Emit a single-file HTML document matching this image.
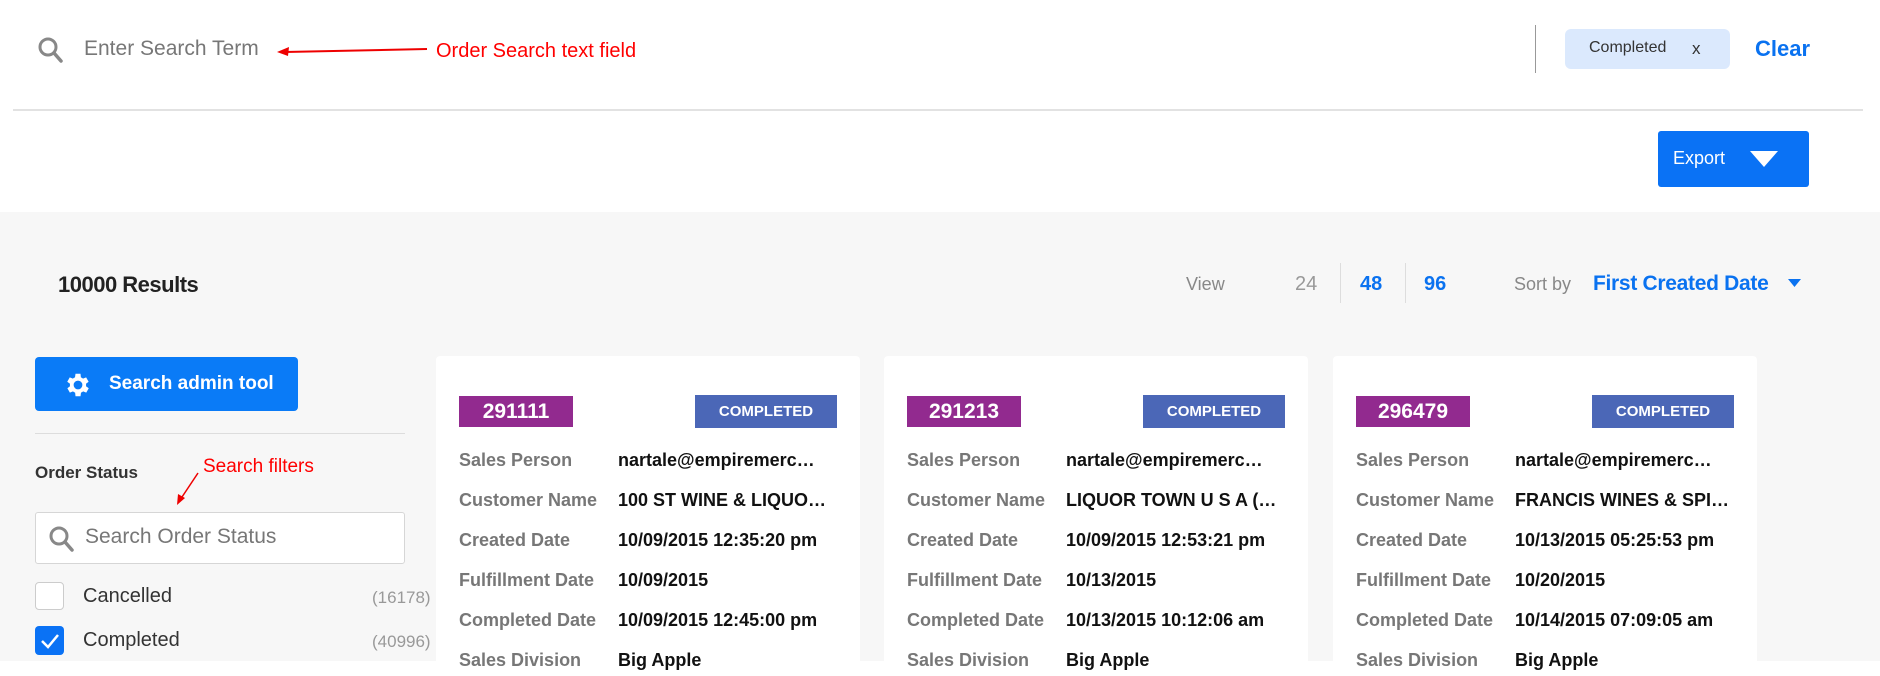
<!DOCTYPE html>
<html><head><meta charset="utf-8"><style>
*{margin:0;padding:0;box-sizing:border-box}
body{width:1880px;height:661px;overflow:hidden;background:#fff;font-family:"Liberation Sans",sans-serif;position:relative}
.a{position:absolute;white-space:nowrap}
.gray{position:absolute;left:0;top:212px;width:1880px;height:449px;background:#f7f7f7}
.card{position:absolute;top:356px;width:424px;height:320px;background:#fff;border-radius:4px}
.num{position:absolute;left:23px;top:40px;width:114px;height:31px;background:#922a8f;color:#fff;font-weight:bold;font-size:21px;text-align:center;line-height:31px}
.st{position:absolute;left:259px;top:39px;width:142px;height:33px;background:#4b67b7;color:#fff;font-weight:bold;font-size:15px;text-align:center;line-height:33px}
.lb{position:absolute;left:23px;font-size:18px;font-weight:bold;color:#777;white-space:nowrap}
.vl{position:absolute;left:182px;font-size:18px;font-weight:bold;color:#111;white-space:nowrap}
</style></head><body>
<svg class="a" style="left:36px;top:35px" width="30" height="30" viewBox="0 0 30 30"><circle cx="12" cy="12" r="8" fill="none" stroke="#888" stroke-width="3"/><line x1="18" y1="18" x2="25" y2="26" stroke="#888" stroke-width="3.5" stroke-linecap="round"/></svg>
<div class="a" style="left:84px;top:37px;font-size:21px;color:#777">Enter Search Term</div>
<svg class="a" style="left:275px;top:44px" width="160" height="14"><line x1="10" y1="8" x2="152" y2="5" stroke="#e00" stroke-width="2"/><polygon points="2,8 14,3 13,12" fill="#e00"/></svg>
<div class="a" style="left:436px;top:40px;font-size:20px;color:#f00">Order Search text field</div>
<div class="a" style="left:1535px;top:25px;width:1px;height:48px;background:#999"></div>
<div class="a" style="left:1565px;top:29px;width:165px;height:40px;background:#dbe9fd;border-radius:6px"></div>
<div class="a" style="left:1589px;top:39px;font-size:16px;color:#333">Completed</div>
<div class="a" style="left:1692px;top:39px;font-size:17px;color:#333">x</div>
<div class="a" style="left:1755px;top:36px;font-size:22px;font-weight:bold;color:#0a72f0">Clear</div>
<div class="a" style="left:13px;top:109px;width:1850px;height:2px;background:#e2e2e2"></div>
<div class="a" style="left:1658px;top:131px;width:151px;height:56px;background:#0a72f5;border-radius:3px"></div>
<div class="a" style="left:1673px;top:148px;font-size:18px;color:#fff">Export</div>
<svg class="a" style="left:1750px;top:151px" width="28" height="16"><polygon points="0,0 28,0 14,16" fill="#fff"/></svg>
<div class="gray"></div>
<div class="a" style="left:58px;top:272px;font-size:22px;color:#222;font-weight:bold;letter-spacing:-0.5px">10000 Results</div>
<div class="a" style="left:1186px;top:274px;font-size:18px;color:#888">View</div>
<div class="a" style="left:1295px;top:273px;font-size:20px;color:#999">24</div>
<div class="a" style="left:1340px;top:263px;width:1px;height:40px;background:#ddd"></div>
<div class="a" style="left:1360px;top:273px;font-size:20px;color:#0a72f0;font-weight:bold">48</div>
<div class="a" style="left:1405px;top:263px;width:1px;height:40px;background:#ddd"></div>
<div class="a" style="left:1424px;top:273px;font-size:20px;color:#0a72f0;font-weight:bold">96</div>
<div class="a" style="left:1514px;top:274px;font-size:18px;color:#888">Sort by</div>
<div class="a" style="left:1593px;top:272px;font-size:21px;color:#0a72f0;font-weight:bold;letter-spacing:-0.3px">First Created Date</div>
<svg class="a" style="left:1788px;top:279px" width="13" height="8"><polygon points="0,0 13,0 6.5,8" fill="#0a72f0"/></svg>
<div class="a" style="left:35px;top:357px;width:263px;height:54px;background:#0a7bf7;border-radius:4px"></div>
<svg class="a" style="left:63px;top:370px" width="30" height="30" viewBox="0 0 24 24"><path fill="#fff" d="M19.4 13a7.5 7.5 0 0 0 0-2l2.1-1.6-2-3.5-2.5 1a7.4 7.4 0 0 0-1.7-1L15 3h-4l-.4 2.9a7.4 7.4 0 0 0-1.7 1l-2.5-1-2 3.5L6.6 11a7.5 7.5 0 0 0 0 2l-2.1 1.6 2 3.5 2.5-1a7.4 7.4 0 0 0 1.7 1L11 21h4l.4-2.9a7.4 7.4 0 0 0 1.7-1l2.5 1 2-3.5zM13 15.5a3.5 3.5 0 1 1 0-7 3.5 3.5 0 0 1 0 7z" transform="translate(-1 0)"/></svg>
<div class="a" style="left:109px;top:373px;font-size:19px;font-weight:bold;color:#fff">Search admin tool</div>
<div class="a" style="left:35px;top:433px;width:370px;height:1px;background:#ddd"></div>
<div class="a" style="left:35px;top:463px;font-size:17px;font-weight:bold;color:#333">Order Status</div>
<div class="a" style="left:203px;top:456px;font-size:19px;color:#f00">Search filters</div>
<svg class="a" style="left:170px;top:470px" width="40" height="40"><line x1="28" y1="3" x2="10" y2="30" stroke="#e00" stroke-width="1.5"/><polygon points="7,35 8,24 15,28" fill="#e00"/></svg>
<div class="a" style="left:35px;top:512px;width:370px;height:52px;background:#fff;border:1px solid #d6d6d6;border-radius:3px"></div>
<svg class="a" style="left:47px;top:524px" width="30" height="30" viewBox="0 0 30 30"><circle cx="12" cy="12" r="8" fill="none" stroke="#888" stroke-width="3"/><line x1="18" y1="18" x2="25" y2="26" stroke="#888" stroke-width="3.5" stroke-linecap="round"/></svg>
<div class="a" style="left:85px;top:525px;font-size:21px;color:#777">Search Order Status</div>
<div class="a" style="left:35px;top:582px;width:29px;height:28px;border:1px solid #ccc;border-radius:4px;background:#fff"></div>
<div class="a" style="left:83px;top:585px;font-size:20px;color:#333">Cancelled</div>
<div class="a" style="left:372px;top:588px;font-size:17px;color:#999">(16178)</div>
<div class="a" style="left:35px;top:626px;width:29px;height:29px;border-radius:4px;background:#0a72f5"></div>
<svg class="a" style="left:40px;top:632px" width="20" height="18"><polyline points="2,9 8,15 18,3" fill="none" stroke="#fff" stroke-width="2.5"/></svg>
<div class="a" style="left:83px;top:629px;font-size:20px;color:#333">Completed</div>
<div class="a" style="left:372px;top:632px;font-size:17px;color:#999">(40996)</div>

<div class="card" style="left:436px"><div class="num">291111</div><div class="st">COMPLETED</div>
<div class="lb" style="top:94px">Sales Person</div><div class="vl" style="top:94px">nartale@empiremerc…</div>
<div class="lb" style="top:134px">Customer Name</div><div class="vl" style="top:134px">100 ST WINE &amp; LIQUO…</div>
<div class="lb" style="top:174px">Created Date</div><div class="vl" style="top:174px">10/09/2015 12:35:20 pm</div>
<div class="lb" style="top:214px">Fulfillment Date</div><div class="vl" style="top:214px">10/09/2015</div>
<div class="lb" style="top:254px">Completed Date</div><div class="vl" style="top:254px">10/09/2015 12:45:00 pm</div>
<div class="lb" style="top:294px">Sales Division</div><div class="vl" style="top:294px">Big Apple</div></div>

<div class="card" style="left:884px"><div class="num">291213</div><div class="st">COMPLETED</div>
<div class="lb" style="top:94px">Sales Person</div><div class="vl" style="top:94px">nartale@empiremerc…</div>
<div class="lb" style="top:134px">Customer Name</div><div class="vl" style="top:134px">LIQUOR TOWN U S A (…</div>
<div class="lb" style="top:174px">Created Date</div><div class="vl" style="top:174px">10/09/2015 12:53:21 pm</div>
<div class="lb" style="top:214px">Fulfillment Date</div><div class="vl" style="top:214px">10/13/2015</div>
<div class="lb" style="top:254px">Completed Date</div><div class="vl" style="top:254px">10/13/2015 10:12:06 am</div>
<div class="lb" style="top:294px">Sales Division</div><div class="vl" style="top:294px">Big Apple</div></div>

<div class="card" style="left:1333px"><div class="num">296479</div><div class="st">COMPLETED</div>
<div class="lb" style="top:94px">Sales Person</div><div class="vl" style="top:94px">nartale@empiremerc…</div>
<div class="lb" style="top:134px">Customer Name</div><div class="vl" style="top:134px">FRANCIS WINES &amp; SPI…</div>
<div class="lb" style="top:174px">Created Date</div><div class="vl" style="top:174px">10/13/2015 05:25:53 pm</div>
<div class="lb" style="top:214px">Fulfillment Date</div><div class="vl" style="top:214px">10/20/2015</div>
<div class="lb" style="top:254px">Completed Date</div><div class="vl" style="top:254px">10/14/2015 07:09:05 am</div>
<div class="lb" style="top:294px">Sales Division</div><div class="vl" style="top:294px">Big Apple</div></div>
</body></html>
